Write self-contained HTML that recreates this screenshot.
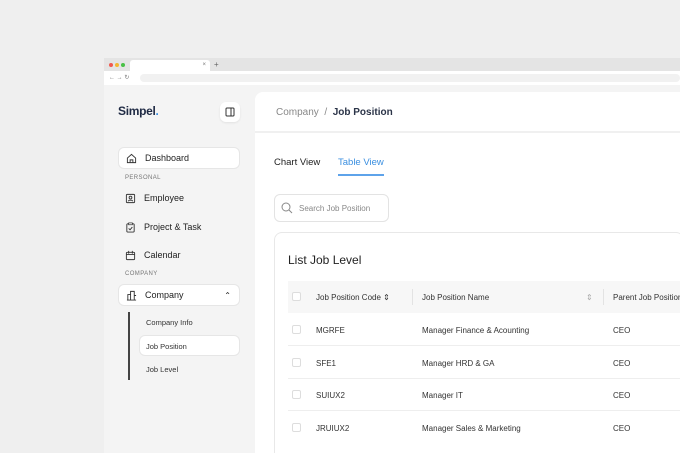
<!DOCTYPE html>
<html><head><style>
*{box-sizing:border-box;margin:0;padding:0}
html,body{width:680px;height:453px;overflow:hidden}
body{background:#efefef;font-family:"Liberation Sans",sans-serif;position:relative;color:#222}
.abs{position:absolute;white-space:nowrap}
.nav{position:absolute;left:118px;width:122px;height:22px;display:flex;align-items:center;font-size:9px;color:#222}
.nav svg{margin:0 8px 0 7px}
.sec{position:absolute;left:125px;font-size:6px;color:#777;letter-spacing:.4px}
.sub{position:absolute;left:146px;font-size:7.5px;color:#333}
.row{position:absolute;height:32px;border-bottom:1px solid #eee;font-size:8px;color:#333;white-space:nowrap}
.row span{position:absolute;top:12px}
.cb{position:absolute;top:11px;width:9px;height:9px;border:1px solid #ddd;border-radius:2px;background:#fff}
</style></head><body>
<div class="abs" style="left:104px;top:58px;width:576px;height:395px;background:#f4f4f4"></div>
<div class="abs" style="left:104px;top:58px;width:576px;height:13px;background:#e4e4e4"></div>
<div class="abs" style="left:109px;top:63px;width:4px;height:4px;border-radius:50%;background:#f05a50"></div>
<div class="abs" style="left:115px;top:63px;width:4px;height:4px;border-radius:50%;background:#f4b731"></div>
<div class="abs" style="left:121px;top:63px;width:4px;height:4px;border-radius:50%;background:#48c146"></div>
<div class="abs" style="left:130px;top:60px;width:80px;height:11px;background:#fff;border-radius:3px 3px 0 0;font-size:6px;color:#777;text-align:right;padding-right:4px;line-height:11px">×</div>
<div class="abs" style="left:214px;top:60px;font-size:8px;color:#666">+</div>
<div class="abs" style="left:104px;top:71px;width:576px;height:14px;background:#fff;font-size:6px;color:#777;padding:3px 0 0 5px">← → ↻</div>
<div class="abs" style="left:140px;top:74px;width:540px;height:8px;background:#f1f1f1;border-radius:4px"></div>

<div class="abs" style="left:118px;top:104px;font-size:12px;font-weight:bold;color:#1f2a44;letter-spacing:-.3px">Simpel<span style="color:#3b8fe0">.</span></div>
<div class="abs" style="left:220px;top:102px;width:20px;height:20px;background:#fff;border-radius:6px;box-shadow:0 1px 2px rgba(0,0,0,.08)">
<svg width="20" height="20" viewBox="0 0 20 20"><rect x="6" y="6" width="8" height="8" rx="1" fill="none" stroke="#333" stroke-width="1"/><line x1="11" y1="6" x2="11" y2="14" stroke="#333"/></svg></div>

<div class="nav" style="top:147px;background:#fff;border:1px solid #e6e6e6;border-radius:6px"><svg width="11" height="11" viewBox="0 0 12 12"><path d="M1.5 5.5L6 1.5l4.5 4v5h-9z M4.5 10.5v-3h3v3" fill="none" stroke="#333" stroke-width="1"/></svg>Dashboard</div>
<div class="sec" style="top:175px">PERSONAL</div>
<div class="nav" style="top:187px"><svg width="11" height="11" viewBox="0 0 12 12"><rect x="1.5" y="1.5" width="9" height="9" rx="1" fill="none" stroke="#333"/><circle cx="6" cy="5" r="1.5" fill="none" stroke="#333"/><path d="M3.5 9c.5-1.5 4.5-1.5 5 0" fill="none" stroke="#333"/></svg>Employee</div>
<div class="nav" style="top:216px"><svg width="11" height="11" viewBox="0 0 12 12"><rect x="2" y="2" width="8" height="9" rx="1" fill="none" stroke="#333"/><rect x="4" y="1" width="4" height="2" fill="#fff" stroke="#333" stroke-width=".8"/><path d="M4 7l1.5 1.5L8 5.5" fill="none" stroke="#333"/></svg>Project &amp; Task</div>
<div class="nav" style="top:244px"><svg width="11" height="11" viewBox="0 0 12 12"><rect x="1.5" y="2.5" width="9" height="8" rx="1" fill="none" stroke="#333"/><path d="M1.5 5h9M4 1v3M8 1v3" stroke="#333"/></svg>Calendar</div>
<div class="sec" style="top:271px">COMPANY</div>
<div class="nav" style="top:284px;background:#fff;border:1px solid #e6e6e6;border-radius:6px"><svg width="11" height="11" viewBox="0 0 12 12"><path d="M1 11h10M2 11V5h3v6M5 11V1.5h4V11M9 11V6h2" fill="none" stroke="#333"/></svg>Company<span style="margin-left:auto;margin-right:8px;font-size:8px">⌃</span></div>
<div class="abs" style="left:128px;top:312px;width:2px;height:68px;background:#444"></div>
<div class="sub" style="top:318px">Company Info</div>
<div class="abs" style="left:139px;top:335px;width:101px;height:21px;background:#fff;border:1px solid #e6e6e6;border-radius:6px"></div>
<div class="sub" style="top:342px">Job Position</div>
<div class="sub" style="top:365px">Job Level</div>

<div class="abs" style="left:255px;top:92px;width:425px;height:361px;background:#fff;border-radius:8px 0 0 0"></div>
<div class="abs" style="left:255px;top:131px;width:425px;height:2px;background:#f0f0f0"></div>
<div class="abs" style="left:276px;top:107px;font-size:10px;color:#888">Company &nbsp;/&nbsp; <span style="color:#2b3448;font-weight:bold">Job Position</span></div>
<div class="abs" style="left:274px;top:157px;font-size:9.5px;color:#222">Chart View</div>
<div class="abs" style="left:338px;top:157px;font-size:9.5px;color:#3b8fe0">Table View</div>
<div class="abs" style="left:338px;top:174px;width:46px;height:2px;background:#5ea3ea"></div>
<div class="abs" style="left:274px;top:194px;width:115px;height:28px;border:1px solid #e3e3e3;border-radius:6px;font-size:8px;color:#888;padding:9px 0 0 24px">Search Job Position</div>
<svg class="abs" style="left:281px;top:202px" width="12" height="12" viewBox="0 0 12 12"><circle cx="5" cy="5" r="4" fill="none" stroke="#888"/><path d="M8 8l3 3" stroke="#888"/></svg>
<div class="abs" style="left:274px;top:232px;width:410px;height:221px;border:1px solid #e8e8e8;border-bottom:none;border-radius:8px 8px 0 0"></div>
<div class="abs" style="left:288px;top:253px;font-size:12px;color:#222">List Job Level</div>
<div class="row" style="left:288px;top:281px;background:#f7f7f7;border:none;width:392px">
<div class="cb" style="left:4px;top:11px"></div><span style="left:28px;top:12px">Job Position Code ⇕</span><div class="abs" style="left:124px;top:8px;width:1px;height:16px;background:#e3e3e3"></div><span style="left:134px">Job Position Name</span><span style="left:298px;color:#aaa">⇕</span><div class="abs" style="left:315px;top:8px;width:1px;height:16px;background:#e3e3e3"></div><span style="left:325px">Parent Job Position</span></div>
<div class="row" style="left:288px;top:314px;width:392px"><div class="cb" style="left:4px"></div><span style="left:28px">MGRFE</span><span style="left:134px">Manager Finance &amp; Acounting</span><span style="left:325px">CEO</span></div>
<div class="row" style="left:288px;top:347px;width:392px"><div class="cb" style="left:4px"></div><span style="left:28px">SFE1</span><span style="left:134px">Manager HRD &amp; GA</span><span style="left:325px">CEO</span></div>
<div class="row" style="left:288px;top:379px;width:392px"><div class="cb" style="left:4px"></div><span style="left:28px">SUIUX2</span><span style="left:134px">Manager IT</span><span style="left:325px">CEO</span></div>
<div class="row" style="left:288px;top:412px;width:392px;border:none"><div class="cb" style="left:4px"></div><span style="left:28px">JRUIUX2</span><span style="left:134px">Manager Sales &amp; Marketing</span><span style="left:325px">CEO</span></div>
</body></html>
